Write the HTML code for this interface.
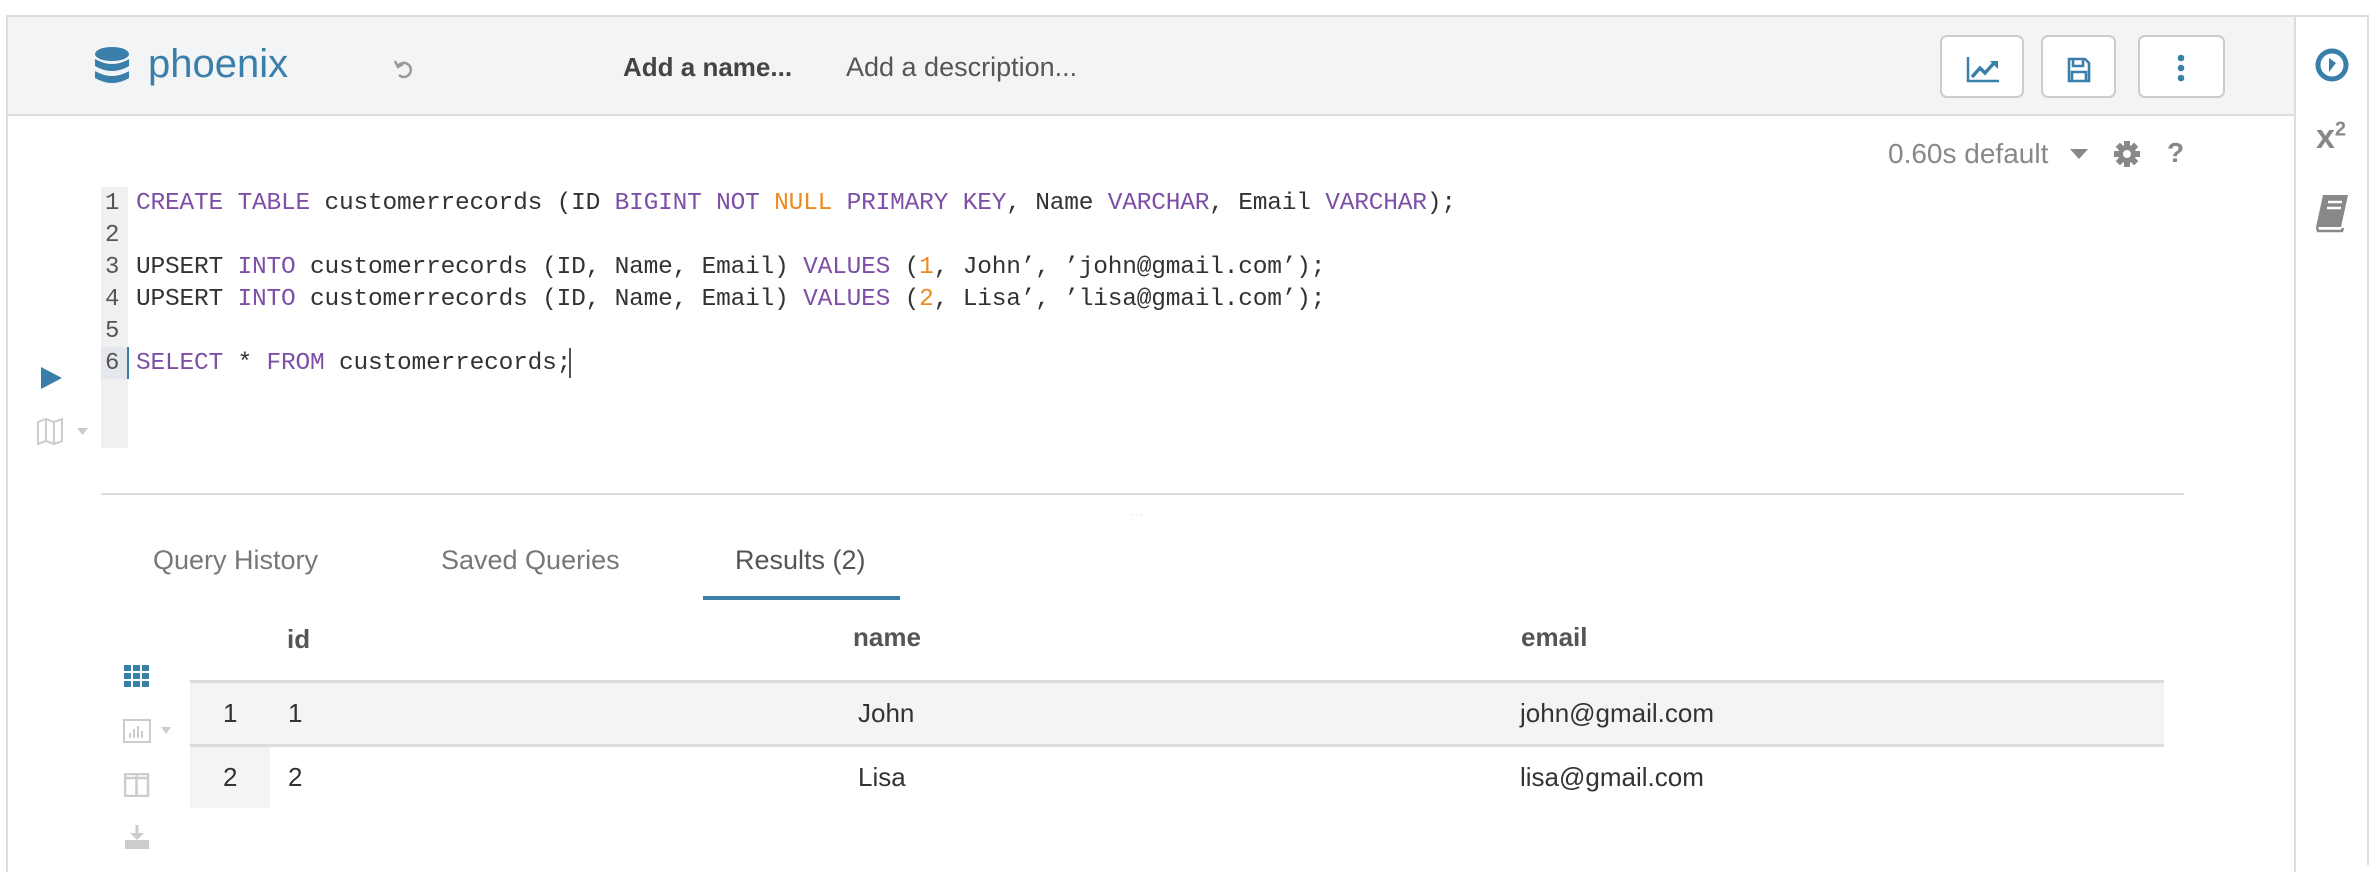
<!DOCTYPE html>
<html><head><meta charset="utf-8"><style>
*{margin:0;padding:0;box-sizing:border-box}
body{width:2378px;height:872px;background:#fff;position:relative;overflow:hidden;font-family:"Liberation Sans",sans-serif;color:#333}
.a{position:absolute;white-space:nowrap}
.code{font-family:"Liberation Mono",monospace;font-size:24px;color:#333;line-height:32px}
.k{color:#7d4fa6}.n{color:#ee8a21}
.btn{position:absolute;top:35px;height:63px;border:2px solid #ccc;border-radius:7px;background:#fff}
</style></head><body>
<div class="a" style="left:6px;top:15px;width:2288px;height:2px;background:#dcdcdc"></div>
<div class="a" style="left:6px;top:17px;width:2288px;height:99px;background:#f3f4f6"></div>
<div class="a" style="left:6px;top:114px;width:2288px;height:2px;background:#dcdcdc"></div>
<div class="a" style="left:6px;top:15px;width:2px;height:857px;background:#dcdcdc"></div>
<div class="a" style="left:2294px;top:15px;width:2px;height:857px;background:#dcdcdc"></div>
<div class="a" style="left:2367px;top:15px;width:2px;height:850px;background:#dcdcdc"></div>
<div class="a" style="left:2294px;top:15px;width:75px;height:2px;background:#dcdcdc"></div>

<svg class="a" style="left:94px;top:47px" width="36" height="42" viewBox="0 0 36 42"><g fill="#3a7fa9"><ellipse cx="18" cy="7" rx="17" ry="7"/><path d="M1 12q17 10 34 0v7q-17 10 -34 0z"/><path d="M1 24q17 10 34 0v7q-17 10 -34 0z"/></g></svg>
<div class="a" style="left:148px;top:42px;font-size:40px;color:#3a7fa9">phoenix</div>
<svg class="a" style="left:394px;top:58px" width="20" height="22" viewBox="0 0 20 22"><path d="M4 8a7 7 0 1 1 1 9" fill="none" stroke="#999" stroke-width="2.5"/><path d="M1 3l3 6 5-3" fill="none" stroke="#999" stroke-width="2.5"/></svg>
<div class="a" style="left:623px;top:52px;font-size:26px;font-weight:bold;color:#444">Add a name...</div>
<div class="a" style="left:846px;top:52px;font-size:27px;color:#555">Add a description...</div>

<div class="btn" style="left:1940px;width:84px"><svg style="position:absolute;left:24px;top:20px" width="34" height="26" viewBox="0 0 34 26"><path d="M2 0v24h31" fill="none" stroke="#3a7fa9" stroke-width="2.5"/><path d="M6 20l8-9 5 5 9-10" fill="none" stroke="#3a7fa9" stroke-width="3.5"/><path d="M24 4h8v8z" fill="#3a7fa9"/></svg></div>
<div class="btn" style="left:2041px;width:75px"><svg style="position:absolute;left:24px;top:20px" width="24" height="26" viewBox="0 0 24 26"><path d="M2 2h16l4 4v18H2z M6 2v7h10V2 M5 24v-9h14v9" fill="none" stroke="#3a7fa9" stroke-width="2.6"/></svg></div>
<div class="btn" style="left:2138px;width:87px"><svg style="position:absolute;left:37px;top:17px" width="8" height="28"><circle cx="4" cy="4" r="3.3" fill="#3a7fa9"/><circle cx="4" cy="14" r="3.3" fill="#3a7fa9"/><circle cx="4" cy="24" r="3.3" fill="#3a7fa9"/></svg></div>

<svg class="a" style="left:2314px;top:47px" width="36" height="36" viewBox="0 0 36 36"><circle cx="18" cy="18" r="14" fill="none" stroke="#3a7fa9" stroke-width="5"/><path d="M15 11l7 5-7 9z" fill="#3a7fa9"/></svg>
<div class="a" style="left:2316px;top:118px;font-size:34px;font-weight:bold;color:#888">x<sup style="font-size:20px">2</sup></div>
<svg class="a" style="left:2314px;top:193px" width="36" height="40" viewBox="0 0 36 40"><path d="M9 2h25l-7 32H2z" fill="#888"/><path d="M3 34l1 4h24l1-3" fill="none" stroke="#888" stroke-width="2.5"/><path d="M14 9h14M13 15h14" stroke="#fff" stroke-width="2.5"/></svg>

<div class="a" style="left:1888px;top:138px;font-size:28px;color:#888">0.60s default</div>
<svg class="a" style="left:2070px;top:149px" width="18" height="10"><path d="M0 0h18L9 10z" fill="#888"/></svg>
<svg class="a" style="left:2113px;top:140px" width="28" height="28" viewBox="0 0 28 28"><g fill="#888"><circle cx="14" cy="14" r="9"/><rect x="11" y="1" width="6" height="26"/><rect x="1" y="11" width="26" height="6"/><rect x="11" y="1" width="6" height="26" transform="rotate(45 14 14)"/><rect x="11" y="1" width="6" height="26" transform="rotate(-45 14 14)"/></g><circle cx="14" cy="14" r="4" fill="#fff"/></svg>
<div class="a" style="left:2167px;top:137px;font-size:28px;font-weight:bold;color:#888">?</div>

<div class="a" style="left:101px;top:187px;width:27px;height:261px;background:#f0f0f0"></div>
<div class="a" style="left:101px;top:347px;width:27px;height:32px;background:#e4e8ec"></div>
<div class="a" style="left:127px;top:347px;width:2px;height:32px;background:#3a7fa9"></div>
<div class="a code" style="left:105px;top:188px;color:#555">1<br>2<br>3<br>4<br>5<br>6</div>
<div class="a code" style="left:136px;top:188px;font-size:24.5px;letter-spacing:-0.2px"><span class="k">CREATE TABLE</span> customerrecords (ID <span class="k">BIGINT NOT</span> <span class="n">NULL</span> <span class="k">PRIMARY KEY</span>, Name <span class="k">VARCHAR</span>, Email <span class="k">VARCHAR</span>);<br>&nbsp;<br>UPSERT <span class="k">INTO</span> customerrecords (ID, Name, Email) <span class="k">VALUES</span> (<span class="n">1</span>, John’, ’john@gmail.com’);<br>UPSERT <span class="k">INTO</span> customerrecords (ID, Name, Email) <span class="k">VALUES</span> (<span class="n">2</span>, Lisa’, ’lisa@gmail.com’);<br>&nbsp;<br><span class="k">SELECT</span> * <span class="k">FROM</span> customerrecords;</div>
<div class="a" style="left:569px;top:348px;width:2px;height:30px;background:#555"></div>
<svg class="a" style="left:41px;top:367px" width="22" height="22"><path d="M0 0l21 11L0 22z" fill="#3a7fa9"/></svg>
<svg class="a" style="left:36px;top:418px" width="56" height="28" viewBox="0 0 56 28"><path d="M2 4l8-3 8 3 8-3v22l-8 3-8-3-8 3z M10 1v22 M18 4v22" fill="none" stroke="#ccc" stroke-width="2"/><path d="M41 10h11l-5.5 7z" fill="#ccc"/></svg>

<div class="a" style="left:101px;top:493px;width:2083px;height:2px;background:#dcdcdc"></div>
<div class="a" style="left:1131px;top:507px;font-size:12px;color:#ddd">···</div>

<div class="a" style="left:153px;top:545px;font-size:27px;color:#777">Query History</div>
<div class="a" style="left:441px;top:545px;font-size:27px;color:#777">Saved Queries</div>
<div class="a" style="left:735px;top:545px;font-size:27px;color:#555">Results (2)</div>
<div class="a" style="left:703px;top:596px;width:197px;height:4px;background:#3a7fa9"></div>

<div class="a" style="left:287px;top:624px;font-size:26px;font-weight:bold;color:#555">id</div>
<div class="a" style="left:853px;top:622px;font-size:26px;font-weight:bold;color:#555">name</div>
<div class="a" style="left:1521px;top:622px;font-size:26px;font-weight:bold;color:#555">email</div>
<div class="a" style="left:190px;top:680px;width:1974px;height:3px;background:#dcdcdc"></div>
<div class="a" style="left:190px;top:683px;width:1974px;height:62px;background:#f3f4f6"></div>
<div class="a" style="left:190px;top:744px;width:1974px;height:3px;background:#dcdcdc"></div>
<div class="a" style="left:190px;top:747px;width:80px;height:61px;background:#f3f4f6"></div>
<div class="a" style="left:223px;top:698px;font-size:26px;color:#333">1</div>
<div class="a" style="left:288px;top:698px;font-size:26px;color:#333">1</div>
<div class="a" style="left:858px;top:698px;font-size:26px;color:#333">John</div>
<div class="a" style="left:1520px;top:698px;font-size:26px;color:#333">john@gmail.com</div>
<div class="a" style="left:223px;top:762px;font-size:26px;color:#333">2</div>
<div class="a" style="left:288px;top:762px;font-size:26px;color:#333">2</div>
<div class="a" style="left:858px;top:762px;font-size:26px;color:#333">Lisa</div>
<div class="a" style="left:1520px;top:762px;font-size:26px;color:#333">lisa@gmail.com</div>

<svg class="a" style="left:124px;top:665px" width="26" height="22"><g fill="#3a7fa9"><rect x="0" y="0" width="7" height="6"/><rect x="9" y="0" width="7" height="6"/><rect x="18" y="0" width="7" height="6"/><rect x="0" y="8" width="7" height="6"/><rect x="9" y="8" width="7" height="6"/><rect x="18" y="8" width="7" height="6"/><rect x="0" y="16" width="7" height="6"/><rect x="9" y="16" width="7" height="6"/><rect x="18" y="16" width="7" height="6"/></g></svg>
<svg class="a" style="left:123px;top:719px" width="56" height="24"><rect x="1" y="1" width="26" height="22" fill="none" stroke="#ccc" stroke-width="2"/><path d="M7 19v-5M11 19v-9M15 19v-12M19 19v-7" stroke="#ccc" stroke-width="2"/><path d="M38 8h10l-5 7z" fill="#ccc"/></svg>
<svg class="a" style="left:124px;top:773px" width="26" height="24"><rect x="1" y="1" width="23" height="22" fill="none" stroke="#ccc" stroke-width="2.5"/><path d="M12.5 1v22M1 5h23" stroke="#ccc" stroke-width="2.5"/></svg>
<svg class="a" style="left:124px;top:825px" width="26" height="24"><path d="M13 0v12" stroke="#ccc" stroke-width="3"/><path d="M6 8h14l-7 7z" fill="#ccc"/><rect x="1" y="15" width="24" height="9" fill="#ccc"/></svg>
</body></html>
